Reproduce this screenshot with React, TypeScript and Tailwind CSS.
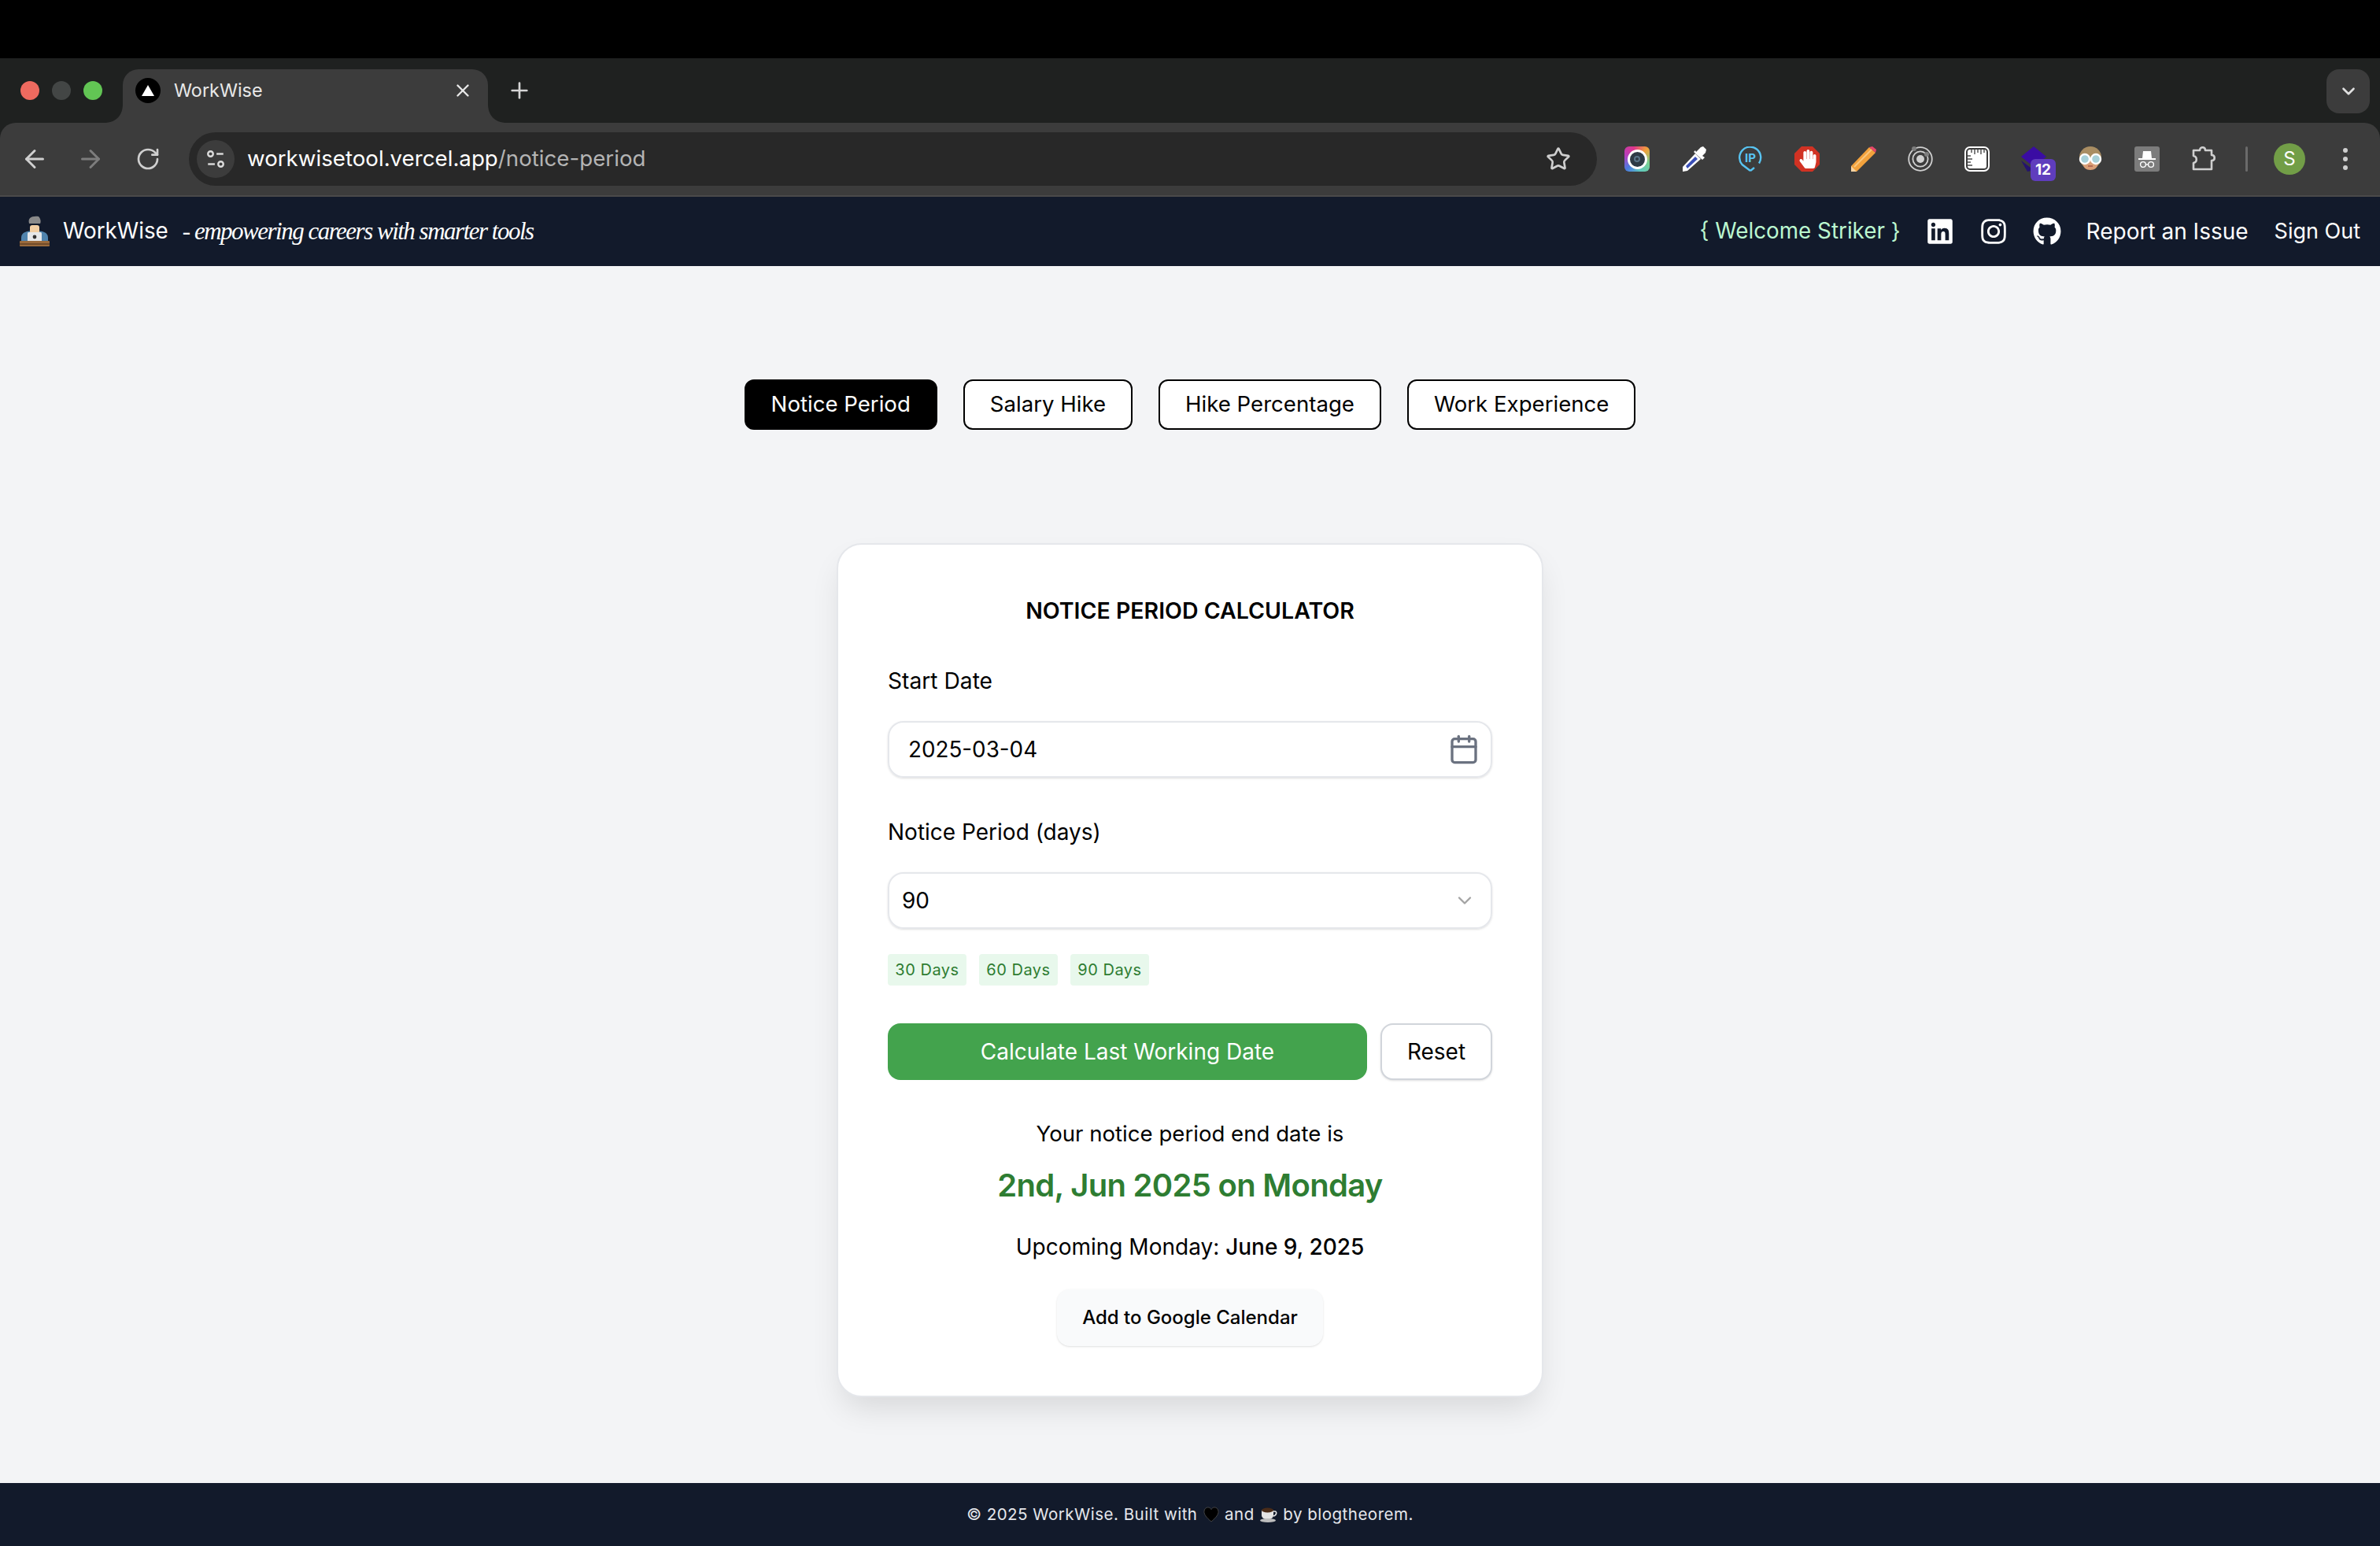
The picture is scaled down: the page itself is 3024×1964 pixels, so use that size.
import {
  ArrowLeft,
  ArrowRight,
  Calendar,
  ChevronDown,
  Plus,
  RotateCw,
  Star,
  X,
} from "lucide-react";

import { FaGithub, FaHandPaper, FaInstagram, FaLinkedin } from "react-icons/fa";

const tabs = ["Notice Period", "Salary Hike", "Hike Percentage", "Work Experience"];

function TabFlare({ flip }: { flip?: boolean }) {
  return (
    <svg
      width="24"
      height="24"
      viewBox="0 0 24 24"
      className={flip ? "absolute bottom-0 right-[-24px] -scale-x-100" : "absolute bottom-0 left-[-24px]"}
    >
      <path d="M24 0 C24 14 16 24 0 24 H24 Z" fill="#3c3c3c" />
    </svg>
  );
}

function CameraExt() {
  return (
    <div className="flex h-8 w-8 items-center justify-center rounded-[6px] bg-[conic-gradient(from_45deg,#f0a13a,#7ad08e,#5fc9c0,#4b7be0,#b43fc0,#e0368a,#f0a13a)]">
      <div className="flex h-[25px] w-[25px] items-center justify-center rounded-full border-[3px] border-white bg-[#2e3a46]">
        <div className="h-[8px] w-[8px] rounded-full border-2 border-[#5a7488]" />
      </div>
    </div>
  );
}

function DropperExt() {
  return (
    <svg width="34" height="32" viewBox="0 0 34 32">
      <path d="M3 26 L19 9 L26 16 L9 31 L3 32 Z" fill="#fff" />
      <path d="M7 25 L19 13 L22 16 L9 28 Z" fill="#3a4fb8" />
      <path d="M20 7 L26 1 L29 0 L33 4 L32 8 L28 12 L31 14 L28 17 L17 7 L19 5 Z" fill="#fff" />
    </svg>
  );
}

function IpExt() {
  return (
    <svg width="30" height="32" viewBox="0 0 30 32">
      <path
        d="M15 31 L4.5 23 A13.5 13.5 0 1 1 26 21.5"
        fill="none"
        stroke="#58c4f2"
        strokeWidth="2.4"
      />
      <path d="M15 31 L20 27" fill="none" stroke="#58c4f2" strokeWidth="2.4" />
      <text
        x="15"
        y="20"
        textAnchor="middle"
        fill="#58c4f2"
        fontSize="15"
        fontWeight="700"
        fontFamily="Inter, sans-serif"
      >
        IP
      </text>
    </svg>
  );
}

function BlockerExt() {
  return (
    <div className="relative h-8 w-8">
      <svg width="32" height="32" viewBox="0 0 32 32">
        <path d="M9 0 H23 L32 9 V23 L23 32 H9 L0 23 V9 Z" fill="#d13223" />
      </svg>
      <FaHandPaper className="absolute left-[5px] top-[4px] text-white" size={24} />
    </div>
  );
}

function PencilExt() {
  return (
    <svg width="32" height="32" viewBox="0 0 32 32">
      <path d="M0 25 L23 1 L31 8 L7 32 L0 32 Z" fill="#f3a23c" />
      <path d="M4 26 L26 4" stroke="#f9c77e" strokeWidth="2" />
      <path d="M23 1 L27 0 L32 4 L31 8 Z" fill="#e8486a" />
      <path d="M0 25 L7 32 L0 32 Z" fill="#f6d3a3" />
    </svg>
  );
}

function OrbitExt() {
  return (
    <svg width="32" height="32" viewBox="0 0 32 32">
      <circle cx="16" cy="16" r="14.8" fill="none" stroke="#d0d0d0" strokeWidth="1.8" />
      <circle cx="16" cy="16" r="9.6" fill="none" stroke="#d0d0d0" strokeWidth="1.8" />
      <circle cx="16" cy="16" r="5" fill="#d0d0d0" />
      <circle cx="8" cy="3" r="3" fill="#7d7d7d" />
      <circle cx="24" cy="10" r="3" fill="#7d7d7d" />
    </svg>
  );
}

function RulerExt() {
  return (
    <svg width="32" height="32" viewBox="0 0 32 32">
      <rect x="1" y="1" width="30" height="30" rx="6" fill="none" stroke="#fff" strokeWidth="2" />
      <rect x="4" y="4" width="24" height="24" rx="3" fill="#fff" />
      <path d="M9 4 V8 M13 4 V10 M17 4 V8 M21 4 V10 M25 4 V8 M4 12 H8 M4 16 H10 M4 20 H8 M4 24 H10" stroke="#4a4a4a" strokeWidth="1.4" />
    </svg>
  );
}

function StackExt() {
  return (
    <div className="relative h-8 w-8">
      <svg width="32" height="32" viewBox="0 0 32 32">
        <path d="M16 0 L32 13 L16 26 L0 13 Z" fill="#3a0ca3" />
        <path d="M0 18 L16 30 L8 32 Z" fill="#24126f" />
      </svg>
      <div
        className="absolute left-[12px] top-[16px] flex h-[28px] w-[32px] items-center justify-center rounded-[6px] bg-[#5f3dbd] text-[19px] font-bold text-white"
      >
        12
      </div>
    </div>
  );
}

function FaceExt() {
  return (
    <svg width="32" height="32" viewBox="0 0 32 32">
      <circle cx="16" cy="14" r="14" fill="#a98d62" />
      <path d="M6 14 H26 V20 C26 27 21 30 16 30 C11 30 6 27 6 20 Z" fill="#d99f77" />
      <circle cx="9" cy="16" r="6" fill="#a7d0d8" stroke="#fff" strokeWidth="2.4" />
      <circle cx="23" cy="16" r="6" fill="#a7d0d8" stroke="#fff" strokeWidth="2.4" />
      <path d="M14 16 H18" stroke="#fff" strokeWidth="2" />
      <path d="M13 25 H19" stroke="#b56a55" strokeWidth="2" />
    </svg>
  );
}

function IncognitoExt() {
  return (
    <div className="flex h-8 w-8 items-center justify-center rounded-[3px] bg-[#7c7c7c]">
      <svg width="24" height="24" viewBox="0 0 24 24">
        <path d="M7 2 H17 L18 11 H6 Z" fill="#fff" />
        <path d="M1 11 H23 V13 H1 Z" fill="#fff" />
        <circle cx="7" cy="19" r="3.4" fill="none" stroke="#fff" strokeWidth="1.4" />
        <circle cx="17" cy="19" r="3.4" fill="none" stroke="#fff" strokeWidth="1.4" />
        <path d="M10 19 H14" stroke="#fff" strokeWidth="1.4" />
      </svg>
    </div>
  );
}

function PuzzleExt() {
  return (
    <svg width="32" height="32" viewBox="0 0 32 32">
      <path
        d="M3 5 H11 C11 0 18 0 18 5 H26 V11 C31 11 31 18 26 18 V29 H3 V21 C8 20 8 13 3 12 Z"
        fill="none"
        stroke="#cfcfcf"
        strokeWidth="2.6"
        strokeLinejoin="round"
      />
    </svg>
  );
}

function SiteInfoIcon() {
  return (
    <svg width="26" height="26" viewBox="0 0 24 24" fill="none" stroke="#dcdcdc" strokeWidth="2.2">
      <circle cx="6" cy="6" r="3" />
      <path d="M13 6 H21" />
      <circle cx="18" cy="18" r="3" />
      <path d="M3 18 H11" />
    </svg>
  );
}

function LogoIcon() {
  return (
    <svg width="40" height="40" viewBox="0 0 40 40">
      <path d="M3 28 C3 21 10 19 20 19 C30 19 37 21 37 28 V33 H3 Z" fill="#4f83ad" />
      <rect x="14" y="12" width="12" height="11" rx="3" fill="#f2cfa4" />
      <path d="M13 10 C11 3 16 0 25 1 C28 4 28 8 27 10 Z" fill="#8a8a8a" />
      <rect x="11" y="21" width="18" height="13" rx="1.5" fill="#e6e8ea" />
      <circle cx="20" cy="27" r="2.4" fill="#333" />
      <rect x="1" y="32" width="38" height="7" rx="1" fill="#9a6a3c" />
      <path d="M1 36 H39" stroke="#4b2f17" strokeWidth="1" />
    </svg>
  );
}

function HeartIcon() {
  return (
    <svg width="22" height="20" viewBox="0 0 22 22" className="inline-block align-[-3px]">
      <path
        d="M11 21 C4 15 1 11 1 7 C1 3 4 1 6.5 1 C8.5 1 10 2 11 4 C12 2 13.5 1 15.5 1 C18 1 21 3 21 7 C21 11 18 15 11 21 Z"
        fill="#000"
        stroke="#4a4a4a"
        strokeWidth="1"
      />
    </svg>
  );
}

function CoffeeIcon() {
  return (
    <svg width="24" height="24" viewBox="0 0 24 24" className="inline-block align-[-4px]">
      <path d="M3 7 H18 V14 C18 17 15 19 10.5 19 C6 19 3 17 3 14 Z" fill="#e4e4e4" />
      <ellipse cx="10.5" cy="7.5" rx="7.5" ry="3" fill="#4a2c18" />
      <path d="M18 9 H20 C22.5 9 22.5 14 18 15" fill="none" stroke="#e4e4e4" strokeWidth="1.6" />
      <ellipse cx="11" cy="20.5" rx="10" ry="2.4" fill="#bdbdbd" />
    </svg>
  );
}

export default function App() {
  const extensions = [
    <CameraExt key="camera" />,
    <DropperExt key="dropper" />,
    <IpExt key="ip" />,
    <BlockerExt key="blocker" />,
    <PencilExt key="pencil" />,
    <OrbitExt key="orbit" />,
    <RulerExt key="ruler" />,
    <StackExt key="stack" />,
    <FaceExt key="face" />,
    <IncognitoExt key="incognito" />,
    <PuzzleExt key="puzzle" />,
  ];

  return (
    <div className="flex min-h-screen flex-col bg-[#f3f4f6] font-['Inter',sans-serif] text-black">

      {/* BROWSER CHROME */}
      <div className="h-[74px] bg-black" />

      <div className="bg-[#1f2120]">

        <div className="flex h-[82px] items-start pt-[14px]">

          <div className="ml-[26px] mt-[15px] flex gap-4">
            <div className="h-6 w-6 rounded-full bg-[#ee6a5f]" />
            <div className="h-6 w-6 rounded-full bg-[#434645]" />
            <div className="h-6 w-6 rounded-full bg-[#62c554]" />
          </div>

          <div className="relative ml-[26px] flex h-[68px] w-[464px] items-start rounded-t-[20px] bg-[#3c3c3c] pt-[11px]">
            <TabFlare />
            <TabFlare flip />
            <div className="ml-4 flex h-8 w-8 items-center justify-center rounded-full bg-black">
              <div className="h-0 w-0 border-x-[8px] border-b-[14px] border-x-transparent border-b-white" />
            </div>
            <span className="ml-[17px] text-[23.4px] leading-8 text-[#e8e8e8]">WorkWise</span>
            <X className="ml-auto mr-[19px] mt-[3px] text-[#e8e8e8]" size={26} strokeWidth={2.2} />
          </div>

          <Plus className="ml-[24px] mt-[11px] text-[#d6d6d6]" size={32} strokeWidth={2} />

          <div className="ml-auto mr-[13px] flex h-[56px] w-[55px] items-center justify-center rounded-[16px] bg-[#3c3c3c]">
            <ChevronDown className="text-[#e0e0e0]" size={26} strokeWidth={2.4} />
          </div>

        </div>

        <div className="flex h-[94px] items-center rounded-t-[20px] border-b-2 border-[#4a4a4a] bg-[#3c3c3c]">

          <ArrowLeft className="ml-[26px] text-[#cfcfcf]" size={36} strokeWidth={2} />
          <ArrowRight className="ml-[35px] text-[#7d7d7d]" size={36} strokeWidth={2} />
          <RotateCw className="ml-[39px] text-[#cfcfcf]" size={32} strokeWidth={2} />

          <div className="ml-[36px] flex h-[68px] w-[1789px] items-center rounded-full bg-[#282828]">
            <div className="ml-[10px] flex h-12 w-12 items-center justify-center rounded-full bg-[#3c3c3c]">
              <SiteInfoIcon />
            </div>
            <span className="ml-4 text-[27.7px] text-white">
              workwisetool.vercel.app<span className="text-[#b4b4b4]">/notice-period</span>
            </span>
            <Star className="ml-auto mr-[33px] text-[#cfcfcf]" size={32} strokeWidth={2} />
          </div>

          <div className="ml-[15px] flex">
            {extensions.map((ext, i) => (
              <div key={i} className="flex w-[72px] items-center justify-center">
                {ext}
              </div>
            ))}
          </div>

          <div className="ml-[17px] h-8 w-[3px] rounded bg-[#6a6a6a]" />

          <div className="ml-[33px] flex h-10 w-10 items-center justify-center rounded-full bg-[#729e47] text-[24px] text-white">
            S
          </div>

          <div className="ml-[48px] flex flex-col gap-[5px]">
            <div className="h-[6px] w-[6px] rounded-full bg-[#cfcfcf]" />
            <div className="h-[6px] w-[6px] rounded-full bg-[#cfcfcf]" />
            <div className="h-[6px] w-[6px] rounded-full bg-[#cfcfcf]" />
          </div>

        </div>

      </div>

      {/* NAVBAR */}
      <div className="flex h-[88px] items-center bg-[#121a2b] text-white">

        <div className="ml-6">
          <LogoIcon />
        </div>

        <span className="ml-4 text-[27.8px]">WorkWise</span>

        <span className="ml-[18px] font-['Liberation_Serif',serif] text-[31px] italic tracking-[-1.5px]">
          - empowering careers with smarter tools
        </span>

        <div className="ml-auto mr-[25px] flex items-center">
          <span className="mr-[32px] text-[27.8px] text-[#bbf7d0]">{"{ Welcome Striker }"}</span>
          <div className="flex items-center gap-8">
            <FaLinkedin size={36} />
            <FaInstagram size={36} />
            <FaGithub size={36} />
          </div>
          <span className="ml-[32px] text-[28px]">Report an Issue</span>
          <span className="ml-[33px] text-[27px]">Sign Out</span>
        </div>

      </div>

      {/* TABS */}
      <div className="flex flex-1 flex-col items-center pt-36 pb-[108px]">

        <div className="flex gap-[33px]">
          {tabs.map((tab, i) => (
            <button
              key={tab}
              className={
                i === 0
                  ? "h-16 rounded-[12px] border-2 border-black bg-black px-8 text-[27.6px] text-white"
                  : "h-16 rounded-[12px] border-2 border-black bg-white px-8 text-[27.6px] text-black"
              }
            >
              {tab}
            </button>
          ))}
        </div>

        {/* CARD */}
        <div className="mt-36 w-[898px] rounded-[32px] border-2 border-[#e5e7eb] bg-white p-[63px] shadow-[0_20px_40px_-8px_rgba(0,0,0,0.12)]">

          <h1 className="-mt-px text-center text-[28.5px] font-semibold leading-[44px]">
            NOTICE PERIOD CALCULATOR
          </h1>

          <div className="mt-[45px] text-[28.2px] leading-[44px]">Start Date</div>

          <div className="mt-[29px] flex h-[72px] items-center justify-between rounded-[20px] border-2 border-[#e5e7eb] pl-[24px] pr-[14px] text-[27.8px] shadow-sm">
            <span className="pt-px">2025-03-04</span>
            <Calendar className="text-[#6b7280]" size={40} strokeWidth={2} />
          </div>

          <div className="mt-[47px] text-[28px] leading-[44px]">Notice Period (days)</div>

          <div className="mt-[29px] flex h-[72px] items-center justify-between rounded-[20px] border-2 border-[#e5e7eb] pl-[16px] pr-[19px] text-[28px] shadow-sm">
            <span>90</span>
            <ChevronDown className="text-[#a3a3a3]" size={28} strokeWidth={2} />
          </div>

          <div className="mt-[32px] flex gap-4">
            {["30 Days", "60 Days", "90 Days"].map((d) => (
              <div
                key={d}
                className="flex h-10 w-[100px] items-center justify-center rounded-[4px] bg-[#e8f8ec] text-[20px] tracking-[0.5px] text-[#2e7d32]"
              >
                {d}
              </div>
            ))}
          </div>

          <div className="mt-12 flex gap-[17px]">
            <button className="h-[72px] w-[609px] rounded-[16px] bg-[#43a34d] text-[28px] text-white">
              Calculate Last Working Date
            </button>
            <button className="h-[72px] w-[142px] rounded-[16px] border-2 border-[#d1d5db] bg-white text-[28px] shadow-sm">
              Reset
            </button>
          </div>

          <div className="mt-[46px] text-center text-[27.6px] leading-[44px]">Your notice period end date is</div>

          <div className="mt-[14px] text-center text-[40px] font-semibold leading-[60px] tracking-[-0.7px] text-[#2e7d32]">
            2nd, Jun 2025 on Monday
          </div>

          <div className="mt-[26px] text-center text-[28px] leading-[44px]">
            Upcoming Monday: <span className="font-medium">June 9, 2025</span>
          </div>

          <div className="mt-8 flex justify-center">
            <button className="h-[72px] w-[338px] rounded-[16px] bg-[#f9fafb] text-[24px] font-medium shadow-sm">
              Add to Google Calendar
            </button>
          </div>

        </div>

      </div>

      {/* FOOTER */}
      <div className="flex h-20 items-center justify-center bg-[#121a2b] text-[20.5px] tracking-[0.5px] text-[#e5e7eb]">
        <span>
          © 2025 WorkWise. Built with <HeartIcon /> and <CoffeeIcon /> by blogtheorem.
        </span>
      </div>

    </div>
  );
}
